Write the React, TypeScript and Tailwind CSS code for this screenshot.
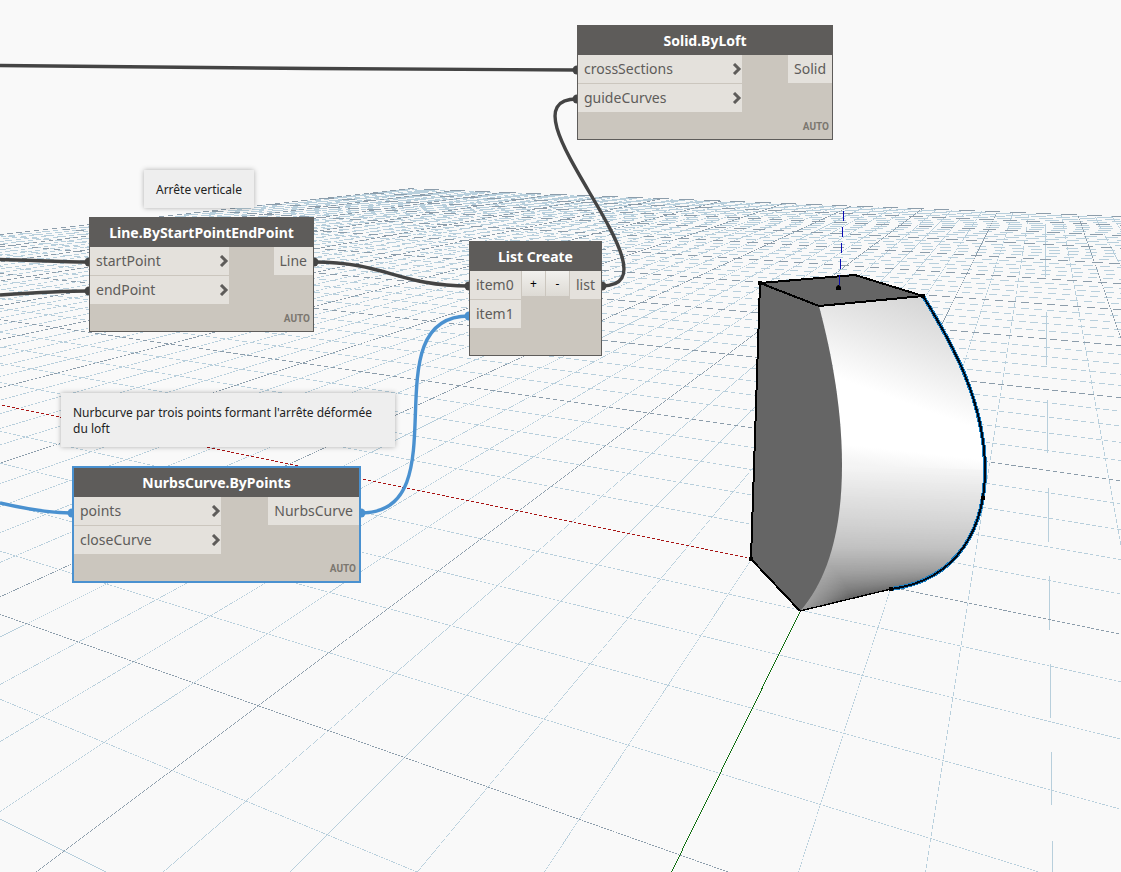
import clsx from 'clsx'

interface GraphNodeProps {
  title: string
  inputs: string[]
  output: string
  className: string
  inputWidth: string
  hasArrows?: boolean
  hasListButtons?: boolean
  isSelected?: boolean
  lacing?: string
}

// Ground plane projection: one unit along i is the red axis, along j the green one
const HORIZON = 117.5
const ORIGIN = { x: 819.3, y: 572.5 }
const GI = -0.0313
const GJ = -0.0766
const VANISH_I = -1404
const VANISH_J = 1044
const GRID = 50
const NEAR = 0.55
const LINE_WIDTH = 0.6

type Point = [number, number]

function depth([i, j]: Point) {
  return 1 + GI * i + GJ * j
}

function project(p: Point): Point {
  const w = depth(p)
  const x = (ORIGIN.x + VANISH_I * GI * p[0] + VANISH_J * GJ * p[1]) / w
  const y = HORIZON + (ORIGIN.y - HORIZON) / w
  return [x, y]
}

// Thin filled quad along a line. Without antialiasing it breaks up into dashes.
function ribbon([x0, y0]: Point, [x1, y1]: Point, width = LINE_WIDTH) {
  const length = Math.hypot(x1 - x0, y1 - y0)
  const nx = (-(y1 - y0) / length) * (width / 2)
  const ny = ((x1 - x0) / length) * (width / 2)
  const corners = [
    [x0 + nx, y0 + ny],
    [x1 + nx, y1 + ny],
    [x1 - nx, y1 - ny],
    [x0 - nx, y0 - ny],
  ]
  return `M${corners.map(([x, y]) => `${x.toFixed(3)} ${y.toFixed(3)}`).join('L')}Z`
}

// Projects a ground segment and cuts off the part that is behind the camera
function segment(start: Point, end: Point, width?: number) {
  const d0 = depth(start)
  const d1 = depth(end)
  if (d0 < NEAR && d1 < NEAR) return ''
  const t = (NEAR - d0) / (d1 - d0)
  const cut: Point = [start[0] + (end[0] - start[0]) * t, start[1] + (end[1] - start[1]) * t]
  return ribbon(project(d0 < NEAR ? cut : start), project(d1 < NEAR ? cut : end), width)
}

function buildGrid() {
  let minor = ''
  let major = ''
  for (let n = -GRID; n <= GRID; n++) {
    const d =
      (n === 0 ? segment([0, 0], [GRID, 0]) : segment([-GRID, n], [GRID, n])) +
      (n === 0 ? segment([0, -GRID], [0, 0]) : segment([n, -GRID], [n, GRID]))
    if (n % 5 === 0) major += d
    else minor += d
  }
  return { minor, major }
}

const grid = buildGrid()

// Lower half of the curved face: each band runs from the left edge to the right edge
const LEFT_EDGE: Point[] = [[842, 465], [842, 520], [832, 575], [800, 611]]
const RIGHT_EDGE: Point[] = [[985, 470], [985, 525], [960, 580], [891, 589]]
const SHADES: Point[] = [[0, 244], [0.15, 229], [0.35, 210], [0.5, 194], [0.7, 158], [0.85, 124], [1, 92]]
const BANDS = 80

function bezier(points: Point[], t: number): Point {
  const u = 1 - t
  const k = [u * u * u, 3 * u * u * t, 3 * u * t * t, t * t * t]
  return [
    points.reduce((sum, p, n) => sum + p[0] * k[n], 0),
    points.reduce((sum, p, n) => sum + p[1] * k[n], 0),
  ]
}

function shade(t: number) {
  const n = Math.max(1, SHADES.findIndex(([stop]) => stop >= t))
  const [t0, v0] = SHADES[n - 1]
  const [t1, v1] = SHADES[n]
  const v = Math.round(v0 + ((v1 - v0) * (t - t0)) / (t1 - t0))
  return `rgb(${v},${v},${v})`
}

const bands = Array.from({ length: BANDS }, (_, n) => {
  const t = n / BANDS
  const [lx, ly] = bezier(LEFT_EDGE, t)
  const [rx, ry] = bezier(RIGHT_EDGE, t)
  const slope = (ry - ly) / (rx - lx)
  return {
    d: `M790 ${ly + slope * (790 - lx)}L1000 ${ly + slope * (1000 - lx)}V620H790Z`,
    fill: shade(t),
  }
})

function Viewport() {
  return (
    <svg className="absolute inset-0 h-full w-full" aria-hidden="true">
      <defs>
        <linearGradient id="upper" gradientUnits="userSpaceOnUse" x1="918" y1="278" x2="876" y2="392">
          <stop offset="0" stopColor="#cfcfcf" />
          <stop offset="0.5" stopColor="#e6e6e6" />
          <stop offset="1" stopColor="#ffffff" />
        </linearGradient>
        <linearGradient id="middle" gradientUnits="userSpaceOnUse" x1="914" y1="452" x2="912" y2="470">
          <stop offset="0" stopColor="#ffffff" />
          <stop offset="1" stopColor="#f4f4f4" />
        </linearGradient>
        <radialGradient id="corner" gradientUnits="userSpaceOnUse" cx="800" cy="606" r="50">
          <stop offset="0" stopColor="#ffffff" stopOpacity="0.4" />
          <stop offset="1" stopColor="#ffffff" stopOpacity="0" />
        </radialGradient>
        <clipPath id="loft">
          <path d="M819 306L923 296C950 340 985 400 985 470C985 525 960 580 891 589L800 611C832 575 842 520 842 465C842 400 828 340 819 306Z" />
        </clipPath>
      </defs>

      <g shapeRendering="crispEdges">
        <path d={grid.minor} fill="#b8cfdc" />
        <path d={grid.major} fill="#8c9dab" />
        <path d={segment([-GRID, 0], [0, 0])} fill="#a81414" />
        <path d={segment([0, 0], [0, GRID], 0.9)} fill="#147014" />
      </g>

      {/* lofted solid */}
      <g clipPath="url(#loft)">
        <rect x="795" y="290" width="195" height="155" fill="url(#upper)" />
        <rect x="795" y="440" width="195" height="40" fill="url(#middle)" />
        {bands.map((band) => (
          <path key={band.d} d={band.d} fill={band.fill} />
        ))}
        <rect x="795" y="550" width="60" height="65" fill="url(#corner)" />
      </g>
      <path d="M760 283L819 306C828 340 842 400 842 465C842 520 832 575 800 611L751 559Z" fill="#656565" />
      <path d="M760 283L855 275L923 296L819 306Z" fill="#656565" />
      <g fill="none" stroke="#000" strokeLinejoin="round" shapeRendering="crispEdges">
        <path d="M760 283L855 275L923 296" strokeWidth="2" />
        <path d="M760 283L819 306L923 296" strokeWidth="2" />
        <path d="M760 283L751 559L800 611" strokeWidth="2" />
        <path d="M800 611L891 589" strokeWidth="1.4" />
      </g>
      <g fill="none" shapeRendering="crispEdges">
        <path d="M923 296C950 340 985 400 985 470C985 525 960 580 891 589" stroke="#1b7fc2" strokeWidth="4" />
        <path d="M923 296C950 340 985 400 985 470C985 525 960 580 891 589" stroke="#000814" strokeWidth="2" />
      </g>
      <path d="M758 281h4v4h-4zM921 294h4v4h-4zM749 557h4v4h-4zM889 587h4v4h-4zM981 496h4v4h-4zM836 287l2-2h1l2 2v3h-5z" />
      <path d={ribbon([843.9, 210], [838.9, 290])} fill="#0a0ab4" shapeRendering="crispEdges" />
    </svg>
  )
}

function Wires() {
  return (
    <svg className="absolute inset-0 h-full w-full" aria-hidden="true">
      <g fill="none" stroke="#444444" strokeWidth="3.4">
        <path d="M0 65.500C200 67 380 70 577 70" />
        <path d="M0 259.500C30 260 60 262 89 262" />
        <path d="M0 295C30 293 60 291 89 291" />
        <path d="M314 262C385 262 399 286 469 286" />
        <path d="M602 286C687 286 492 99 577 99" />
      </g>
      <g fill="none" stroke="#4a91d0" strokeWidth="3.4">
        <path d="M0 503C26 509 50 513 72 513" />
        <path d="M361 513C463 513 368 316 469 316" />
      </g>
      <g fill="#444444">
        <circle cx="577" cy="70" r="4.500" />
        <circle cx="577" cy="99" r="4.500" />
        <circle cx="89" cy="262" r="4.500" />
        <circle cx="89" cy="291" r="4.500" />
        <circle cx="314" cy="262" r="4.500" />
        <circle cx="469" cy="286" r="4.500" />
        <circle cx="602" cy="286" r="4.500" />
      </g>
      <g fill="#4a91d0">
        <circle cx="72" cy="513" r="4.500" />
        <circle cx="361" cy="513" r="4.500" />
        <circle cx="469" cy="316" r="4.500" />
      </g>
    </svg>
  )
}

function Chevron() {
  return (
    <svg className="h-3 w-2.5 shrink-0" viewBox="0 0 10 12" fill="none" stroke="#5e5c5a" strokeWidth="3">
      <path d="M2 1L7 6L2 11" />
    </svg>
  )
}

function GraphNode({
  title,
  inputs,
  output,
  className,
  inputWidth,
  hasArrows = true,
  hasListButtons = false,
  isSelected = false,
  lacing = 'AUTO',
}: GraphNodeProps) {
  return (
    <section
      className={clsx(
        'absolute bg-[#cbc6be] text-sm text-[#5e5c5a]',
        isSelected ? 'border-2 border-[#4a91d0]' : 'border border-[#5e5c5a]',
        className,
      )}
    >
      <h2 className="h-[29px] bg-[#5e5c5a] text-center leading-[29px] font-bold text-white">{title}</h2>
      <div className="flex items-start justify-between">
        <ul className={inputWidth}>
          {inputs.map((name) => (
            <li key={name} className="mb-px flex h-7 items-center justify-between bg-[#e4e1dc] pl-[6px]">
              {name}
              {hasArrows && <Chevron />}
            </li>
          ))}
        </ul>
        {hasListButtons && (
          <>
            <button className="h-[25px] w-[23px] bg-linear-to-b from-[#f2f1ee] to-[#dddad4] text-xs text-black">+</button>
            <button className="h-[25px] w-[23px] bg-linear-to-b from-[#f2f1ee] to-[#dddad4] text-xs text-black">-</button>
          </>
        )}
        <p className="h-7 bg-[#e4e1dc] px-[6px] leading-7">{output}</p>
      </div>
      <p className="h-[26px] pt-1 pr-[3px] text-right font-[Roboto,sans-serif] text-[10px] leading-5 font-bold text-[#7b7770]">
        {lacing}
      </p>
    </section>
  )
}

function Note({ text, className }: { text: string; className: string }) {
  return (
    <p
      className={clsx(
        'absolute bg-[#eeeeee] px-3 pt-3 pb-[10px] text-xs leading-4 text-[#222222] shadow-[0_0_5px_rgba(0,0,0,0.3)]',
        className,
      )}
    >
      {text}
    </p>
  )
}

export default function App() {
  return (
    <main className="relative min-h-screen overflow-hidden bg-[#f9f9f9] font-['Noto_Sans','Open_Sans',sans-serif]">
      <Viewport />
      <Wires />

      <Note text="Arrête verticale" className="top-[170px] left-[144px]" />
      <Note
        text="Nurbcurve par trois points formant l'arrête déformée du loft"
        className="top-[393px] left-[61px] w-[334px]"
      />

      <GraphNode
        title="Solid.ByLoft"
        inputs={['crossSections', 'guideCurves']}
        output="Solid"
        className="top-[25px] left-[577px] w-[256px]"
        inputWidth="w-[164px]"
      />
      <GraphNode
        title="Line.ByStartPointEndPoint"
        inputs={['startPoint', 'endPoint']}
        output="Line"
        className="top-[217px] left-[89px] w-[225px]"
        inputWidth="w-[139px]"
      />
      <GraphNode
        title="List Create"
        inputs={['item0', 'item1']}
        output="list"
        className="top-[241px] left-[469px] w-[133px]"
        inputWidth="w-[51px]"
        hasArrows={false}
        hasListButtons
        lacing=""
      />
      <GraphNode
        title="NurbsCurve.ByPoints"
        inputs={['points', 'closeCurve']}
        output="NurbsCurve"
        className="top-[466px] left-[72px] w-[289px]"
        inputWidth="w-[147px]"
        isSelected
      />
    </main>
  )
}
